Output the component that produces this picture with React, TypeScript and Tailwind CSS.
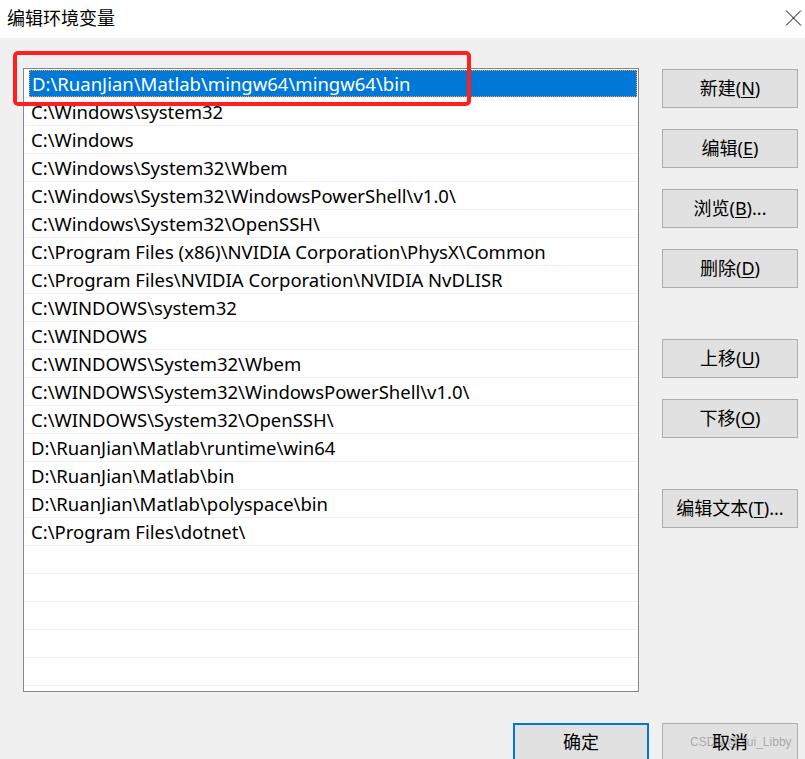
const paths = [
  'D:\\RuanJian\\Matlab\\mingw64\\mingw64\\bin',
  'C:\\Windows\\system32',
  'C:\\Windows',
  'C:\\Windows\\System32\\Wbem',
  'C:\\Windows\\System32\\WindowsPowerShell\\v1.0\\',
  'C:\\Windows\\System32\\OpenSSH\\',
  'C:\\Program Files (x86)\\NVIDIA Corporation\\PhysX\\Common',
  'C:\\Program Files\\NVIDIA Corporation\\NVIDIA NvDLISR',
  'C:\\WINDOWS\\system32',
  'C:\\WINDOWS',
  'C:\\WINDOWS\\System32\\Wbem',
  'C:\\WINDOWS\\System32\\WindowsPowerShell\\v1.0\\',
  'C:\\WINDOWS\\System32\\OpenSSH\\',
  'D:\\RuanJian\\Matlab\\runtime\\win64',
  'D:\\RuanJian\\Matlab\\bin',
  'D:\\RuanJian\\Matlab\\polyspace\\bin',
  'C:\\Program Files\\dotnet\\',
];

const rows = [...paths, ...Array(5).fill('')];

function Btn({ label, hot, tail }: { label: string; hot: string; tail?: string }) {
  return (
    <button className="flex h-[39px] w-[136px] items-center justify-center border border-[#adadad] bg-[#e1e1e1] text-[18px] text-black">
      {label}(<span className="underline underline-offset-2">{hot}</span>){tail}
    </button>
  );
}

export default function App() {
  return (
    <div
      className="relative h-[759px] w-[805px] overflow-hidden bg-[#f0f0f0]"
      style={{ fontFamily: '"Noto Sans", "Noto Sans CJK SC", sans-serif' }}
    >
      {/* title bar */}
      <div className="flex h-[38px] items-center justify-between bg-white pb-[3px] pl-[7px] pr-[3px]">
        <span className="text-[18px] leading-none text-black">编辑环境变量</span>
        <svg width="17" height="16" viewBox="0 0 17 16">
          <path d="M1 0.5 L16 15.5 M16 0.5 L1 15.5" stroke="#000" strokeWidth="1" />
        </svg>
      </div>

      <div className="flex pl-[23px] pt-[30px]">
        {/* path list */}
        <div className="h-[624px] w-[616px] border border-[#828790] bg-white pt-px">
          {rows.map((p, i) => (
            <div key={i} className="h-[28px] border-b border-[#f0f0f0] px-px">
              {i === 0 ? (
                <div className="ml-[4px] flex h-[27px] items-center whitespace-nowrap border border-dotted border-[#ff9a2e] bg-[#0078d7] pl-[2px] text-[18.5px] text-white">
                  {p}
                </div>
              ) : (
                <div className="flex h-[27px] items-center whitespace-nowrap pl-[6px] text-[18.5px] text-black">
                  {p}
                </div>
              )}
            </div>
          ))}
        </div>

        {/* side buttons */}
        <div className="ml-[23px] flex flex-col pt-px">
          <Btn label="新建" hot="N" />
          <div className="mt-[21px]"><Btn label="编辑" hot="E" /></div>
          <div className="mt-[21px]"><Btn label="浏览" hot="B" tail="..." /></div>
          <div className="mt-[21px]"><Btn label="删除" hot="D" /></div>
          <div className="mt-[51px]"><Btn label="上移" hot="U" /></div>
          <div className="mt-[21px]"><Btn label="下移" hot="O" /></div>
          <div className="mt-[51px]"><Btn label="编辑文本" hot="T" tail="..." /></div>
        </div>
      </div>

      {/* bottom buttons */}
      <div className="mt-[31px] flex justify-end gap-[13px] pr-[7px]">
        <button className="flex h-[39px] w-[136px] items-center justify-center border-2 border-[#0078d7] bg-[#e1e1e1] text-[18px] text-black">
          确定
        </button>
        <button className="relative flex h-[39px] w-[136px] items-center justify-center border border-[#adadad] bg-[#e1e1e1] text-[18px] text-black">
          <span
            className="absolute left-[27px] top-[12px] whitespace-nowrap text-[12px] leading-none text-[#9a9a9a]/80"
            style={{ fontFamily: '"Liberation Sans", sans-serif' }}
          >
            CSDN @Yui_Libby
          </span>
          <span className="relative">取消</span>
        </button>
      </div>

      {/* red annotation */}
      <div className="pointer-events-none absolute left-[13px] top-[51px] h-[55px] w-[458px] rounded-[5px] border-[4px] border-[#ff1f1f]" />
    </div>
  );
}
